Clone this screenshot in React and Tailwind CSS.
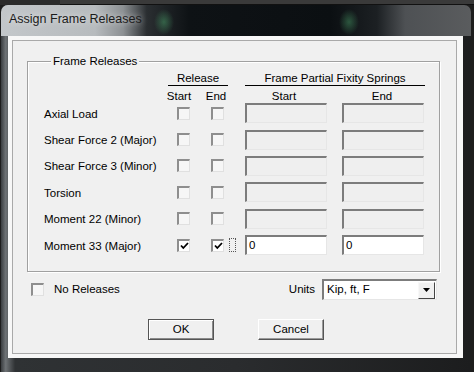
import React from "react";

const rows = [
  { label: "Axial Load" },
  { label: "Shear Force 2 (Major)" },
  { label: "Shear Force 3 (Minor)" },
  { label: "Torsion" },
  { label: "Moment 22 (Minor)" },
  { label: "Moment 33 (Major)", checked: true },
];

const CheckBox = ({ checked }) => (
  <div
    className={`w-[13px] h-[13px] border-t-[2px] border-l-[2px] border-t-[#8e8e8e] border-l-[#8e8e8e] border-r border-b border-r-[#e0e0e0] border-b-[#e0e0e0] flex items-center justify-center ${
      checked ? "bg-white" : "bg-[#f6f6f6]"
    }`}
  >
    {checked && (
      <svg width="9" height="8" viewBox="0 0 9 8">
        <path d="M1 3.5 L3.3 6 L8 1" stroke="#000" strokeWidth="1.8" fill="none" />
      </svg>
    )}
  </div>
);

const Field = ({ enabled }) => (
  <div
    className={`w-[82px] h-[20px] border-t-[2px] border-l-[2px] border-t-[#7c7c7c] border-l-[#7c7c7c] border-r border-b border-r-[#e6e6e6] border-b-[#e6e6e6] flex items-center pl-[2px] ${
      enabled ? "bg-white" : "bg-[#efefef]"
    }`}
  >
    {enabled && <span>0</span>}
  </div>
);

const Button = ({ children, primary }) => (
  <button
    className={`w-[66px] h-[21px] bg-[#f0f0f0] flex items-center justify-center ${
      primary
        ? "border border-[#555] shadow-[inset_1px_1px_0_#fff,inset_-1px_-1px_0_#8a8a8a]"
        : "border border-t-[#fff] border-l-[#fff] border-r-[#555] border-b-[#555] shadow-[inset_-1px_-1px_0_#9a9a9a]"
    }`}
  >
    {children}
  </button>
);

export default function App() {
  return (
    <div
      className="w-[474px] h-[372px] bg-[#1d1d1d] overflow-hidden flex flex-col"
      style={{ fontFamily: '"Liberation Sans", Arial, sans-serif' }}
    >
      {/* behind-window strip */}
      <div className="h-[5px] shrink-0 flex">
        <div className="w-[60px] bg-[#2b2b2b]" />
        <div className="flex-1 bg-[#3a3a3a] border-b border-[#111]" />
      </div>

      {/* window */}
      <div className="flex-1 mr-[3px] ml-[1px] rounded-t-[7px] overflow-hidden flex flex-col bg-[linear-gradient(to_right,#3a3d40_0%,#6e7275_1%,#2f3234_3%,#2a2c2e_50%,#1c1d1e_100%)]">
        <div className="h-[31px] shrink-0 flex items-center pl-[8px] pb-[2px] bg-[radial-gradient(ellipse_10px_13px_at_163px_17px,rgba(70,150,100,0.55),transparent),radial-gradient(ellipse_10px_13px_at_348px_17px,rgba(70,150,100,0.5),transparent),linear-gradient(to_right,#c3c7ca_0%,#b7bbbe_20%,#8c9093_26%,#2a2e31_31%,#0e1215_40%,#0b0f12_70%,#1c2023_80%,#4e5154_86%,#5a5c5e_100%)]">
          <span className="text-[12.5px] text-[#1b1b1b] [text-shadow:0_0_6px_rgba(255,255,255,0.7)]">
            Assign Frame Releases
          </span>
        </div>

        {/* client */}
        <div className="flex-1 ml-[7px] mr-[8px] mb-[14px] bg-[#f7f7f7] pt-[4px] pl-[4px] pr-[6px] pb-[4px] flex">
          <div className="flex-1 bg-[#f0f0f0] border border-[#a9a9a9] text-[11.5px] text-black flex flex-col">
            <fieldset className="mt-[13px] ml-[14px] w-[413px] h-[218px] border border-[#a0a0a0] shadow-[inset_1px_1px_0_#fff,1px_1px_0_#fff] pl-[16px]">
              <legend className="ml-[7px] px-[2px] bg-[#f0f0f0] leading-[14px]">Frame Releases</legend>

              <div className="flex mt-[2px] h-[16px] items-end">
                <div className="w-[124px]" />
                <div className="w-[60px] text-center border-b border-black leading-[14px]">Release</div>
                <div className="w-[17px]" />
                <div className="w-[180px] text-center border-b border-black leading-[14px]">
                  Frame Partial Fixity Springs
                </div>
              </div>

              <div className="flex h-[14px] items-center mt-[4px]">
                <div className="w-[120px]" />
                <div className="w-[30px] text-center">Start</div>
                <div className="w-[30px] ml-[7px] text-center">End</div>
                <div className="w-[30px] ml-[38px] text-center">Start</div>
                <div className="w-[30px] ml-[68px] text-center">End</div>
              </div>

              <div className="flex flex-col mt-[-4px]">
                {rows.map((r) => (
                  <div key={r.label} className="h-[26.4px] flex items-center">
                    <div className="w-[133px] pt-[2px]">{r.label}</div>
                    <div className="w-[34px]">
                      <CheckBox checked={r.checked} />
                    </div>
                    <div className="w-[34px] flex items-center gap-[5px]">
                      <CheckBox checked={r.checked} />
                      {r.checked && (
                        <div className="w-[7px] h-[14px] border border-dotted border-[#555]" />
                      )}
                    </div>
                    <div className="w-[97px]">
                      <Field enabled={r.checked} />
                    </div>
                    <Field enabled={r.checked} />
                  </div>
                ))}
              </div>
            </fieldset>

            <div className="flex items-center mt-[7px] ml-[18px] h-[21px]">
              <CheckBox />
              <span className="ml-[10px]">No Releases</span>
              <span className="ml-[169px]">Units</span>
              <div className="ml-[7px] w-[115px] h-[21px] bg-white border-t-[2px] border-l-[2px] border-t-[#7c7c7c] border-l-[#7c7c7c] border-r border-b border-r-[#e6e6e6] border-b-[#e6e6e6] flex items-center justify-between pl-[3px]">
                <span>Kip, ft, F</span>
                <div className="w-[17px] h-[17px] bg-[#f0f0f0] border border-t-[#f8f8f8] border-l-[#f8f8f8] border-r-[#444] border-b-[#444] flex items-center justify-center mr-[1px]">
                  <svg width="7" height="4" viewBox="0 0 7 4">
                    <path d="M0 0 H7 L3.5 4 Z" fill="#000" />
                  </svg>
                </div>
              </div>
            </div>

            <div className="flex mt-[19px] ml-[135px] gap-[44px]">
              <Button primary>OK</Button>
              <Button>Cancel</Button>
            </div>
          </div>
        </div>
      </div>
    </div>
  );
}
